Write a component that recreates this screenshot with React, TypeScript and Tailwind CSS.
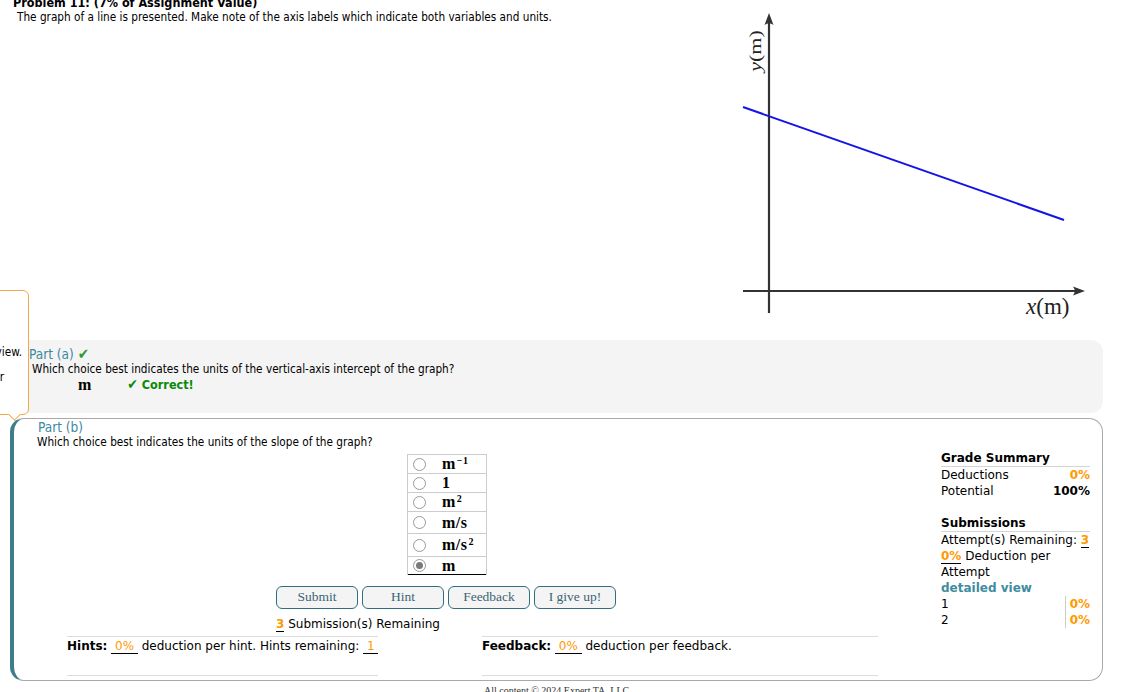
import React from 'react';

// Tahoma-like text is approximated with DejaVu Sans Condensed, Verdana-like with DejaVu Sans.
const TAHOMA = "font-['DejaVu_Sans_Condensed','DejaVu_Sans',sans-serif] font-stretch-condensed";
const VERDANA = "font-['DejaVu_Sans',sans-serif] font-stretch-normal";
const SERIF = "font-['Liberation_Serif','Times_New_Roman',serif] font-stretch-normal";

type Choice = { base: string; sup?: string; h: string; checked?: boolean };

const CHOICES: Choice[] = [
  { base: 'm', sup: '−1', h: 'h-[19px]' },
  { base: '1', h: 'h-[19px]' },
  { base: 'm', sup: '2', h: 'h-[19px]' },
  { base: 'm/s', h: 'h-[22px]' },
  { base: 'm/s', sup: '2', h: 'h-[23px]' },
  { base: 'm', h: 'h-[19px]', checked: true },
];

const BUTTONS = ['Submit', 'Hint', 'Feedback', 'I give up!'];

function Graph() {
  return (
    <svg width="350" height="330" viewBox="0 0 350 330" className="mr-[54px] shrink-0">
      <line x1="31" y1="20" x2="31" y2="313" stroke="#333" strokeWidth="2.2" />
      <path d="M31 13 L35.5 25 Q31 21.5 26.5 25 Z" fill="#333" />
      <line x1="5" y1="291" x2="340" y2="291" stroke="#333" strokeWidth="2.2" />
      <path d="M347 291 L335 295.5 Q338.5 291 335 286.5 Z" fill="#333" />
      <line x1="5" y1="107" x2="326" y2="220" stroke="#1414e6" strokeWidth="2" />
      <text
        transform="translate(17 51) rotate(-90) scale(1 0.8)"
        textAnchor="middle"
        dominantBaseline="central"
        fontFamily="Liberation Serif, serif"
        fontSize="22"
        fill="#222"
      >
        <tspan fontStyle="italic">y</tspan>(m)
      </text>
      <text x="288" y="314" fontFamily="Liberation Serif, serif" fontSize="23" fill="#222">
        <tspan fontStyle="italic">x</tspan>(m)
      </text>
    </svg>
  );
}

function Radio({ checked }: { checked?: boolean }) {
  return (
    <span className="flex h-[13px] w-[13px] shrink-0 items-center justify-center rounded-full border border-[#999999] bg-white">
      {checked && <span className="h-[7px] w-[7px] rounded-full bg-[#7a7a7a]" />}
    </span>
  );
}

function ChoiceTable() {
  return (
    <div className="ml-[369px] mt-[4px] w-[80px] border-x border-[#cccccc]">
      {CHOICES.map((c, i) => (
        <div
          key={i}
          className={`flex items-center border-t border-[#cccccc] pl-[5px] ${c.h} ${
            i === CHOICES.length - 1 ? 'border-b border-b-black' : ''
          }`}
        >
          <Radio checked={c.checked} />
          <span className={`${SERIF} ml-[16px] text-[16px] font-bold leading-[16px] tracking-[0.5px]`}>
            {c.base}
            {c.sup && <sup className="ml-[1px] text-[10px]">{c.sup}</sup>}
          </span>
        </div>
      ))}
    </div>
  );
}

function Underlined({ children, bold }: { children: React.ReactNode; bold?: boolean }) {
  return (
    <span className={`border-b border-black text-[#ff9900] ${bold ? 'font-bold' : ''}`}>{children}</span>
  );
}

function GradeSummary() {
  return (
    <div className={`${VERDANA} mt-[1px] w-[149px] shrink-0 text-[12px] leading-[16px]`}>
      <div className="border-b border-[#d4d4d4] font-bold leading-[15px]">Grade Summary</div>
      <div className="flex justify-between">
        <span>Deductions</span>
        <span className="font-bold text-[#ff9900]">0%</span>
      </div>
      <div className="flex justify-between">
        <span>Potential</span>
        <span className="font-bold">100%</span>
      </div>
      <div className="mt-[17px] border-b border-[#d4d4d4] font-bold leading-[15px]">Submissions</div>
      <div className="whitespace-nowrap">
        Attempt(s) Remaining: <Underlined bold>3</Underlined>
      </div>
      <div className="whitespace-nowrap">
        <Underlined bold>0%</Underlined> Deduction per
      </div>
      <div>Attempt</div>
      <div className="font-bold text-[#3f8ca0]">detailed view</div>
      {['1', '2'].map((n) => (
        <div key={n} className="flex">
          <span className="flex-1">{n}</span>
          <span className="w-[25px] border-l border-[#cccccc] text-right font-bold text-[#ff9900]">0%</span>
        </div>
      ))}
    </div>
  );
}

export default function App() {
  return (
    <div className={`${TAHOMA} relative h-[692px] w-[1142px] overflow-hidden bg-white text-black`}>
      <div className="flex h-[340px] items-start justify-between">
        <div className="mt-[-5px] pl-[13px]">
          <div className="text-[12.5px] font-bold leading-[15px]">Problem 11: (7% of Assignment Value)</div>
          <div className="pl-[4px] text-[11.7px] leading-[15px]">
            The graph of a line is presented. Make note of the axis labels which indicate both variables and units.
          </div>
        </div>
        <Graph />
      </div>

      <div className="ml-[10px] mr-[39px] h-[73px] rounded-[12px] bg-[#f4f4f4] pl-[19px] pt-[7px]">
        <div className="flex items-center gap-[4px] text-[13.5px] leading-[15px] text-[#3a8aa0]">
          Part (a) <span className="text-[15px] leading-[15px] text-[#2e9a2e]">✔</span>
        </div>
        <div className="pl-[3px] text-[11.7px] leading-[15px]">
          Which choice best indicates the units of the vertical-axis intercept of the graph?
        </div>
        <div className="flex items-center pl-[49px] leading-[16px]">
          <span className={`${SERIF} text-[16px] font-bold`}>m</span>
          <span className="ml-[36px] text-[12.5px] font-bold text-[#0a8a0a]">
            <span className="text-[14px] leading-[14px]">✔</span> Correct!
          </span>
        </div>
      </div>

      <div className="ml-[10px] mr-[39px] mt-[5px] h-[263px] rounded-[14px] border border-l-4 border-[#a9a9a9] border-l-[#3e7e8c] pl-[24px] pr-[12px] pt-[1px]">
        <div className="text-[13.5px] leading-[15px] text-[#3a8aa0]">Part (b)</div>
        <div className="ml-[-1px] text-[11.7px] leading-[15px]">
          Which choice best indicates the units of the slope of the graph?
        </div>
        <div className="flex">
          <div className="flex-1">
            <ChoiceTable />
            <div className="ml-[238px] mt-[11px] flex gap-[4px]">
              {BUTTONS.map((b) => (
                <button
                  key={b}
                  className={`${SERIF} h-[23px] w-[82px] rounded-[6px] border border-[#2f6f80] bg-[#f4f4f4] text-[13.5px] text-[#3b6475]`}
                >
                  {b}
                </button>
              ))}
            </div>
            <div className={`${VERDANA} ml-[238px] mt-[7px] text-[12px] leading-[16px]`}>
              <Underlined bold>3</Underlined> Submission(s) Remaining
            </div>
            <div className={`${VERDANA} mt-[4px] flex text-[12px]`}>
              <div className="ml-[29px] h-[40px] w-[311px] shrink-0 whitespace-nowrap border-y border-[#dddddd] pt-[1px] leading-[16px]">
                <span className="font-bold">Hints:</span> <Underlined>&nbsp;0%&nbsp;</Underlined> deduction per hint.
                Hints remaining: <Underlined>&nbsp;1&nbsp;</Underlined>
              </div>
              <div className="ml-[104px] h-[40px] w-[396px] shrink-0 whitespace-nowrap border-y border-[#dddddd] pt-[1px] leading-[16px]">
                <span className="font-bold">Feedback:</span> <Underlined>&nbsp;0%&nbsp;</Underlined> deduction per
                feedback.
              </div>
            </div>
          </div>
          <GradeSummary />
        </div>
      </div>

      <div className={`${SERIF} mt-[4px] pl-[484px] text-[10px] leading-[12px] text-[#333]`}>
        All content © 2024 Expert TA, LLC
      </div>

      <div className="absolute left-[-91px] top-[290px] z-10 h-[125px] w-[120px] rounded-[6px] border border-[#f5a64c] bg-white pt-[54px] text-[11.7px] leading-[15px]">
        <div className="whitespace-nowrap pr-[6px] text-right">a detailed view.</div>
        <div className="mt-[10px] whitespace-nowrap pr-[24px] text-right">for</div>
        <span className="absolute bottom-[-5px] left-[100px] h-[9px] w-[9px] rotate-45 border-b border-r border-[#f5a64c] bg-white" />
      </div>
    </div>
  );
}
